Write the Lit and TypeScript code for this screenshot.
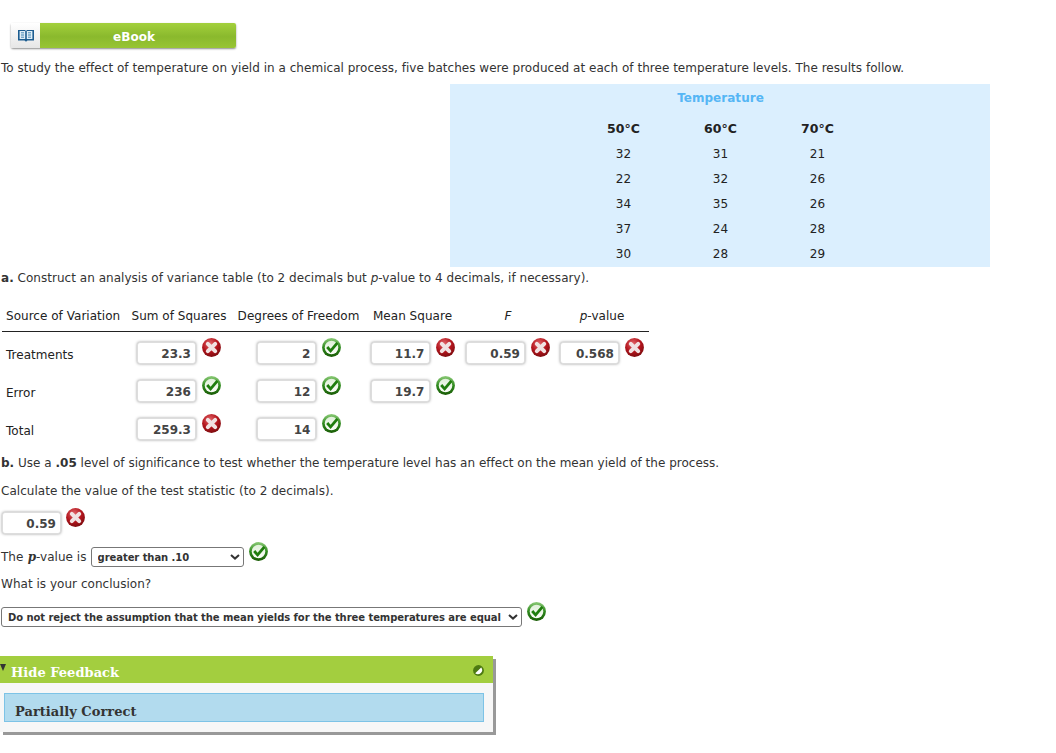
import { html, svg, LitElement, css } from 'lit';
import { customElement } from 'lit/decorators.js';

const crossIcon = svg`
  <svg class="mark" viewBox="0 0 19 19" width="19" height="19">
    <defs>
      <radialGradient id="redBall" cx="42%" cy="30%" r="75%">
        <stop offset="0" stop-color="#e2666a" />
        <stop offset="0.55" stop-color="#b3151d" />
        <stop offset="1" stop-color="#760a0d" />
      </radialGradient>
    </defs>
    <circle cx="9.5" cy="9.5" r="9.4" fill="url(#redBall)" />
    <path d="M5.8 5.8l7.4 7.4M13.2 5.8l-7.4 7.4" stroke="#f1e2e2" stroke-width="4" stroke-linecap="round" />
  </svg>
`;

const checkIcon = svg`
  <svg class="mark" viewBox="0 0 19 19" width="19" height="19">
    <defs>
      <linearGradient id="greenRing" x1="0" y1="0" x2="0" y2="1">
        <stop offset="0" stop-color="#8ccb78" />
        <stop offset="0.5" stop-color="#2f8a1e" />
        <stop offset="1" stop-color="#1a5c06" />
      </linearGradient>
      <linearGradient id="greenFace" x1="0" y1="0" x2="0" y2="1">
        <stop offset="0" stop-color="#dff0d8" />
        <stop offset="1" stop-color="#fbfdf9" />
      </linearGradient>
    </defs>
    <circle cx="9.5" cy="9.5" r="9.4" fill="url(#greenRing)" />
    <circle cx="9.5" cy="9.5" r="6.8" fill="url(#greenFace)" />
    <path d="M5.2 9l3.4 3.9 6.8-8" fill="none" stroke="#1f7d0d" stroke-width="2.8" />
  </svg>
`;

const bookIcon = svg`
  <svg viewBox="0 0 16 13" width="16" height="13">
    <path d="M0 1h7l1 1 1-1h7v10.5h-6.5l-1.5 1.2-1.5-1.2h-6.5z" fill="#1d5d90" />
    <path d="M1.6 1.9h5.6v8h-5.6zM8.8 1.9h5.6v8h-5.6z" fill="#dfeef7" />
    <path d="M3 3.6h3M3 5.2h3M3 6.8h3M3 8.4h3M10 3.6h3M10 5.2h3M10 6.8h3M10 8.4h3" stroke="#5f97c0" stroke-width="0.9" />
  </svg>
`;

const chevron = svg`
  <svg class="chev" viewBox="0 0 10 6" width="10" height="6">
    <path d="M1 1l4 3.6 4-3.6" fill="none" stroke="#333" stroke-width="2" />
  </svg>
`;

type Mark = 'ok' | 'bad';
interface Answer {
  value: string;
  mark: Mark;
}
interface AnovaRow {
  label: string;
  cells: Answer[];
}

const batches = [
  ['32', '31', '21'],
  ['22', '32', '26'],
  ['34', '35', '26'],
  ['37', '24', '28'],
  ['30', '28', '29'],
];

const anova: AnovaRow[] = [
  {
    label: 'Treatments',
    cells: [
      { value: '23.3', mark: 'bad' },
      { value: '2', mark: 'ok' },
      { value: '11.7', mark: 'bad' },
      { value: '0.59', mark: 'bad' },
      { value: '0.568', mark: 'bad' },
    ],
  },
  {
    label: 'Error',
    cells: [
      { value: '236', mark: 'ok' },
      { value: '12', mark: 'ok' },
      { value: '19.7', mark: 'ok' },
    ],
  },
  {
    label: 'Total',
    cells: [
      { value: '259.3', mark: 'bad' },
      { value: '14', mark: 'ok' },
    ],
  },
];

@customElement('app-root')
export class AppRoot extends LitElement {
  static styles = css`
    :host {
      display: block;
      min-height: 753px;
      background: #fff;
      color: #333;
      font-family: 'DejaVu Sans', Verdana, sans-serif;
      font-size: 12px;
      line-height: 18px;
      letter-spacing: 0.03px;
      padding: 23px 0 0 1px;
      box-sizing: border-box;
    }

    p {
      margin: 0;
    }

    .ebook {
      display: flex;
      width: 225px;
      height: 25px;
      margin-left: 10px;
      border-radius: 2px;
      box-shadow: 0 1px 2px rgba(0, 0, 0, 0.45);
    }

    .ebook-icon {
      width: 29px;
      display: flex;
      align-items: center;
      justify-content: center;
      background: linear-gradient(#fff, #e6e6e6);
    }

    .ebook-label {
      flex: 1;
      display: flex;
      align-items: center;
      justify-content: center;
      padding: 2px 8px 0 0;
      color: #fff;
      font-weight: bold;
      background: linear-gradient(#a3d03c, #8ab92d 55%, #98c534);
      border-radius: 0 2px 2px 0;
    }

    .intro {
      margin-top: 11px;
    }

    .temps {
      display: grid;
      grid-template-columns: 125px repeat(3, 97px);
      grid-template-rows: 27px 31px repeat(5, 25px);
      width: 540px;
      height: 183px;
      margin: 7px 0 0 449px;
      background: #dbeffe;
      text-align: center;
      color: #222;
    }

    .temps > * {
      line-height: 25px;
    }

    .temps .title {
      grid-column: 2 / 5;
      color: #55b6f5;
      font-weight: bold;
      padding-top: 2px;
    }

    .temps .pad {
      grid-column: 1;
    }

    .temps .head {
      font-weight: bold;
      font-size: 12.5px;
      align-self: end;
      margin-bottom: 1px;
    }

    .part {
      margin-top: 2px;
    }

    .anova {
      display: grid;
      grid-template-columns: 123px 108px 131px 97px 94px 94px;
      width: 647px;
      margin: 16px 0 0 1px;
    }

    .anova .hd {
      text-align: center;
      height: 29px;
      line-height: 26px;
      border-bottom: 1px solid #222;
      box-sizing: border-box;
      color: #222;
      white-space: nowrap;
    }

    .anova .hd.src {
      text-align: left;
      padding-left: 4px;
    }

    .anova .label {
      height: 38px;
      padding: 7px 0 0 4px;
      box-sizing: border-box;
      line-height: 32px;
      color: #222;
    }

    .cell {
      height: 38px;
      display: flex;
      justify-content: center;
      align-items: flex-start;
      gap: 6px;
      padding-top: 10px;
      box-sizing: border-box;
    }

    .mark {
      display: block;
      flex: none;
      margin-top: -4px;
    }

    .num {
      width: 59px;
      height: 22px;
      box-sizing: border-box;
      border: 1px solid #ddd;
      border-radius: 3px;
      box-shadow: 0 0 3px rgba(0, 0, 0, 0.4);
      background: #fff;
      text-align: right;
      padding-right: 4px;
      font-weight: bold;
      line-height: 22px;
      color: #444;
    }

    .partb {
      margin-top: 8px;
      letter-spacing: 0.01px;
    }

    .calc {
      margin-top: 10px;
    }

    .solo {
      display: flex;
      gap: 5px;
      margin: 12px 0 0 1px;
    }

    .pick {
      display: flex;
      align-items: center;
      height: 20px;
      margin-top: 13px;
    }

    .pick.wide {
      margin-top: 14px;
    }

    .pick .mark {
      align-self: flex-start;
      margin: -5px 0 0 5px;
    }

    .pick b {
      font-family: 'DejaVu Serif', serif;
      font-style: italic;
    }

    .sel {
      position: relative;
      display: block;
      height: 20px;
      margin-left: 4px;
    }

    .pick.wide .sel {
      margin-left: 0;
    }

    .chev {
      position: absolute;
      right: 4px;
      top: 7px;
      pointer-events: none;
    }

    select {
      display: block;
      appearance: none;
      height: 20px;
      box-sizing: border-box;
      border: 1px solid #777;
      border-radius: 3px;
      background: #fff;
      font-family: 'DejaVu Sans', sans-serif;
      font-weight: bold;
      font-size: 10px;
      letter-spacing: -0.06px;
      color: #333;
      padding: 0 0 0 6px;
    }

    .short {
      width: 153px;
    }

    .long {
      width: 521px;
    }

    .conclusion {
      margin-top: 8px;
    }

    .feedback {
      width: 493px;
      height: 76px;
      margin: 29px 0 0 -1px;
      background: #f7f7f7;
      box-shadow: 3px 3px 0 #999;
    }

    .fb-head {
      position: relative;
      display: flex;
      align-items: center;
      justify-content: space-between;
      height: 27px;
      padding: 0 9px 0 11px;
      background: #a3ce3f;
      color: #fff;
      font-family: 'DejaVu Serif', Georgia, serif;
      font-weight: bold;
      font-size: 13px;
    }

    .fb-head span {
      padding-top: 7px;
    }

    .fb-head::before {
      content: '';
      position: absolute;
      left: 0;
      top: 8px;
      border: 3px solid transparent;
      border-top: 7px solid #333;
      border-bottom: 0;
    }

    .fb-head svg {
      margin-top: 2px;
    }

    .fb-body {
      height: 27px;
      margin: 10px 9px 0 4px;
      padding-left: 10px;
      background: #b2dbee;
      border: 1px solid #7dc3e6;
      font-family: 'DejaVu Serif', Georgia, serif;
      font-weight: bold;
      font-size: 13px;
      line-height: 36px;
      color: #333;
      overflow: hidden;
    }
  `;

  private renderAnswer(a: Answer) {
    return html`<div class="cell">
      <div class="num">${a.value}</div>
      ${a.mark === 'ok' ? checkIcon : crossIcon}
    </div>`;
  }

  protected render() {
    return html`
      <div class="ebook">
        <div class="ebook-icon">${bookIcon}</div>
        <div class="ebook-label">eBook</div>
      </div>
      <p class="intro">
        To study the effect of temperature on yield in a chemical process, five batches were
        produced at each of three temperature levels. The results follow.
      </p>
      <div class="temps">
        <div class="pad"></div>
        <div class="title">Temperature</div>
        <div class="pad"></div>
        <div class="head">50°C</div>
        <div class="head">60°C</div>
        <div class="head">70°C</div>
        ${batches.map(
          (row) => html`<div class="pad"></div>
            ${row.map((v) => html`<div>${v}</div>`)}`
        )}
      </div>
      <p class="part">
        <b>a.</b> Construct an analysis of variance table (to 2 decimals but <i>p</i>-value to 4
        decimals, if necessary).
      </p>
      <div class="anova">
        <div class="hd src">Source of Variation</div>
        <div class="hd">Sum of Squares</div>
        <div class="hd">Degrees of Freedom</div>
        <div class="hd">Mean Square</div>
        <div class="hd"><i>F</i></div>
        <div class="hd"><i>p</i>-value</div>
        ${anova.map(
          (row) => html`<div class="label">${row.label}</div>
            ${row.cells.map((c) => this.renderAnswer(c))}
            ${Array.from({ length: 5 - row.cells.length }, () => html`<div></div>`)}`
        )}
      </div>
      <p class="partb">
        <b>b.</b> Use a <b>.05</b> level of significance to test whether the temperature level has
        an effect on the mean yield of the process.
      </p>
      <p class="calc">Calculate the value of the test statistic (to 2 decimals).</p>
      <div class="solo">
        <div class="num">0.59</div>
        ${crossIcon}
      </div>
      <div class="pick">
        The <b>&nbsp;p</b>-value is
        <span class="sel">
          <select class="short"><option>greater than .10</option></select>
          ${chevron}
        </span>
        ${checkIcon}
      </div>
      <p class="conclusion">What is your conclusion?</p>
      <div class="pick wide">
        <span class="sel">
          <select class="long">
            <option>Do not reject the assumption that the mean yields for the three temperatures are equal</option>
          </select>
          ${chevron}
        </span>
        ${checkIcon}
      </div>
      <div class="feedback">
        <div class="fb-head">
          <span>Hide Feedback</span>
          <svg viewBox="0 0 11 11" width="11" height="11">
            <circle cx="5.5" cy="5.5" r="5.4" fill="#4d7a12" />
            <path d="M2.2 8.2l6-5.8a4.2 4.2 0 0 1-6 5.8z" fill="#fff" />
          </svg>
        </div>
        <div class="fb-body">Partially Correct</div>
      </div>
    `;
  }
}
